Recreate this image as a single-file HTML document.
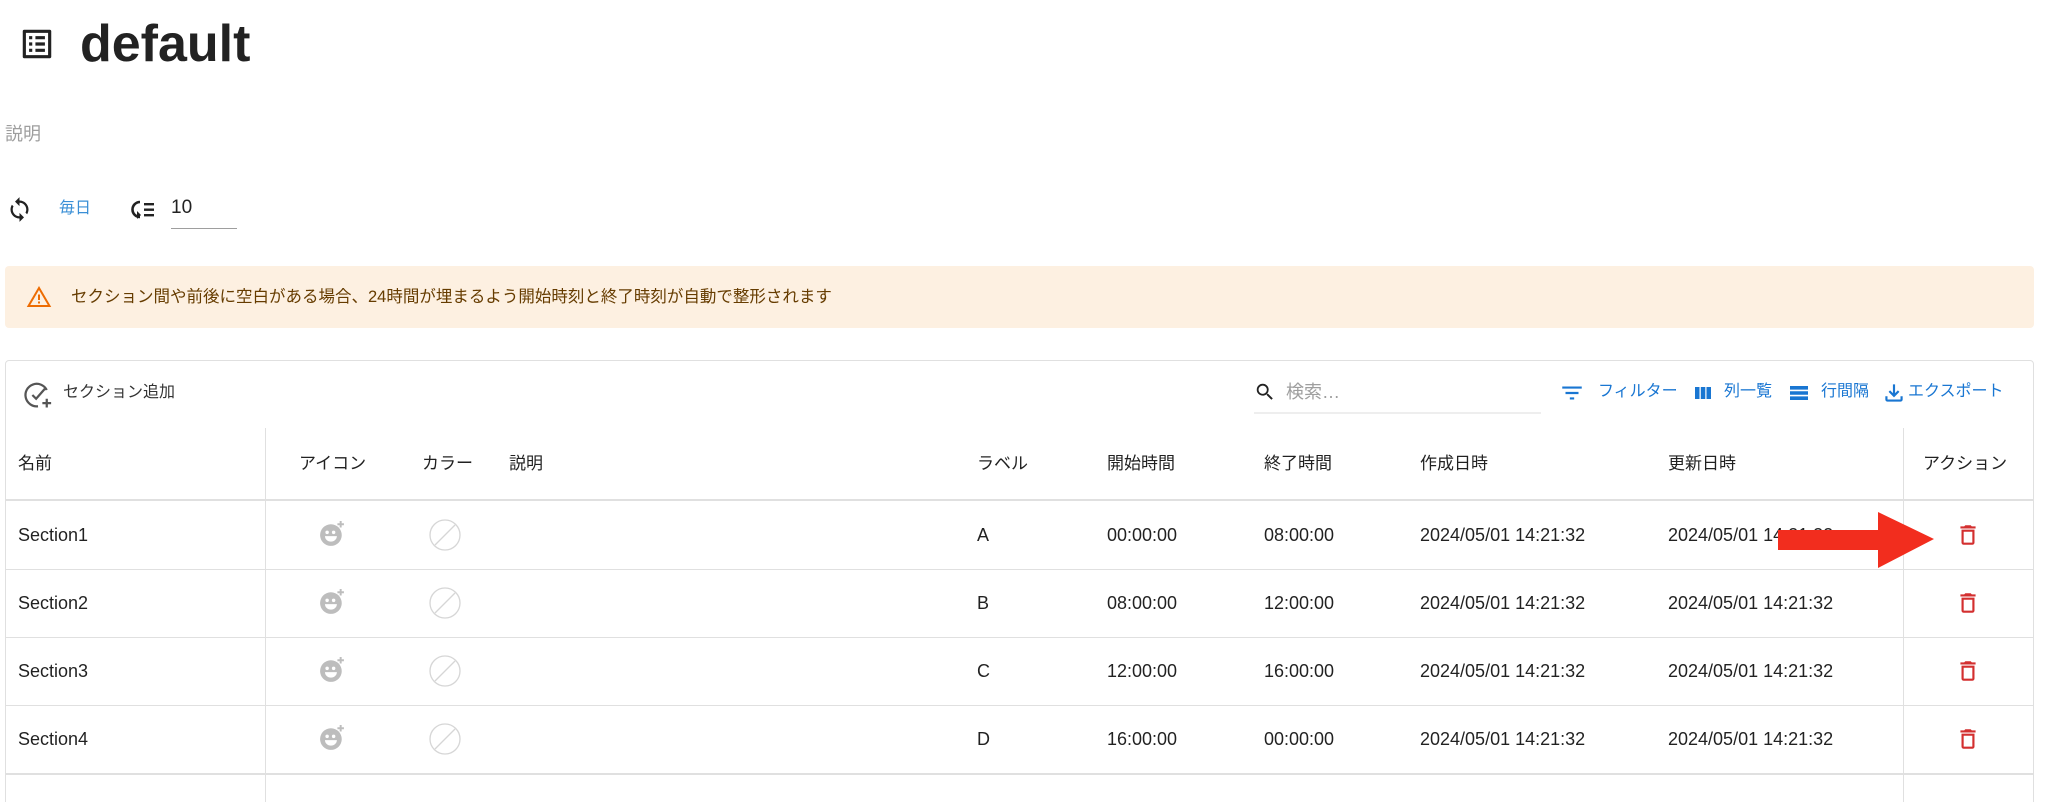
<!DOCTYPE html>
<html style="height:802px;overflow:hidden"><head><meta charset="utf-8"><style>
*{margin:0;padding:0;box-sizing:border-box}
body{width:2048px;height:802px;overflow:hidden;background:#fff;font-family:"Liberation Sans","Noto Sans CJK JP",sans-serif;color:#222;position:relative}
.a{position:absolute;white-space:nowrap}
.t{font-size:18px;line-height:24px;color:rgba(0,0,0,.87)}
.h{font-size:17px;line-height:24px;color:rgba(0,0,0,.87)}
.b{color:#1976d2;font-size:16px;line-height:24px}
.hl{position:absolute;left:5px;width:2029px;height:1px;background:#e0e0e0}
.vl{position:absolute;width:1px;background:#e0e0e0}
</style></head><body>
<svg class="a" style="left:18px;top:25px" width="38" height="38" viewBox="0 0 24 24"><path fill="#222" d="M19 5v14H5V5h14m1.1-2H3.9c-.5 0-.9.4-.9.9v16.2c0 .4.4.9.9.9h16.2c.4 0 .9-.5.9-.9V3.9c0-.5-.5-.9-.9-.9zM11 7h6v2h-6V7zm0 4h6v2h-6v-2zm0 4h6v2h-6zM7 7h2v2H7zm0 4h2v2H7zm0 4h2v2H7z"/></svg>
<div class="a" style="left:80px;top:12px;font-size:52px;font-weight:bold;line-height:64px;color:#222">default</div>
<div class="a" style="left:5px;top:121px;font-size:18px;line-height:26px;color:#9e9e9e">説明</div>
<svg class="a" style="left:6px;top:196px" width="27" height="27" viewBox="0 0 24 24"><path fill="#222" d="M12 4V1L8 5l4 4V6c3.310 0 6 2.690 6 6 0 1.010-.25 1.970-.7 2.800l1.460 1.460C19.540 15.030 20 13.570 20 12c0-4.420-3.580-8-8-8zm0 14c-3.310 0-6-2.690-6-6 0-1.010.25-1.970.7-2.800L5.240 7.740C4.460 8.970 4 10.430 4 12c0 4.420 3.580 8 8 8v3l4-4-4-4v3z"/></svg>
<div class="a b" style="left:59px;top:197px;color:#3a8fd6">毎日</div>
<svg class="a" style="left:130px;top:198px" width="30" height="24" viewBox="0 0 30 24"><path d="M10 4 A7 7 0 0 0 10 19" fill="none" stroke="#222" stroke-width="2.6"/><path d="M7 16l4 4-4 4z" fill="#222" transform="translate(0,-3)"/><rect x="14" y="5" width="10" height="2.4" fill="#222"/><rect x="14" y="10.5" width="10" height="2.4" fill="#222"/><rect x="14" y="16" width="10" height="2.4" fill="#222"/></svg>
<div class="a" style="left:171px;top:196px;font-size:19px;line-height:24px;color:#222">10</div>
<div class="a" style="left:171px;top:228px;width:66px;height:1px;background:#9e9e9e"></div>

<div class="a" style="left:5px;top:266px;width:2029px;height:62px;background:#fdf0e1;border-radius:4px"></div>
<svg class="a" style="left:26px;top:285px" width="26" height="24" viewBox="0 0 24 24"><path d="M12 3L1.5 21h21z" fill="none" stroke="#ed6c02" stroke-width="2"/><rect x="11" y="9.5" width="2" height="5.5" fill="#ed6c02"/><rect x="11" y="16.5" width="2" height="2" fill="#ed6c02"/></svg>
<div class="a" style="left:71px;top:285px;font-size:16.5px;line-height:24px;color:#663c00">セクション間や前後に空白がある場合、24時間が埋まるよう開始時刻と終了時刻が自動で整形されます</div>

<div class="a" style="left:5px;top:360px;width:2029px;height:460px;border:1px solid #e0e0e0;border-radius:4px"></div>
<svg class="a" style="left:23px;top:380px" width="30" height="30" viewBox="0 0 24 24"><path d="M19 8A9 9 0 1 0 12 21" fill="none" stroke="#555" stroke-width="1.8"/><path d="M7.5 12l3 3 7-8" fill="none" stroke="#555" stroke-width="1.8"/><path d="M19 15v7M15.5 18.5h7" stroke="#555" stroke-width="1.8"/></svg>
<div class="a" style="left:63px;top:381px;font-size:16px;line-height:24px;color:#333">セクション追加</div>
<svg class="a" style="left:1254px;top:381px" width="22" height="22" viewBox="0 0 24 24"><path fill="#222" d="M15.5 14h-.79l-.28-.27A6.470 6.470 0 0 0 16 9.5 6.5 6.5 0 1 0 9.5 16c1.610 0 3.090-.59 4.230-1.570l.27.28v.79l5 4.990L20.490 19l-4.990-5zm-6 0C7.010 14 5 11.990 5 9.5S7.010 5 9.5 5 14 7.010 14 9.5 11.990 14 9.5 14z"/></svg>
<div class="a" style="left:1286px;top:380px;font-size:18px;line-height:24px;color:#9e9e9e">検索…</div>
<div class="a" style="left:1254px;top:412px;width:287px;height:2px;background:#eee"></div>
<svg class="a" style="left:1559px;top:380px" width="26" height="26" viewBox="0 0 24 24"><path fill="#1976d2" d="M10 18h4v-2h-4v2zM3 6v2h18V6H3zm3 7h12v-2H6v2z"/></svg>
<div class="a b" style="left:1598px;top:380px">フィルター</div>
<svg class="a" style="left:1691px;top:381px" width="24" height="24" viewBox="0 0 24 24"><path fill="#1976d2" d="M4 6h4.5v12H4zM9.8 6h4.5v12H9.8zM15.5 6H20v12h-4.5z"/></svg>
<div class="a b" style="left:1724px;top:380px">列一覧</div>
<svg class="a" style="left:1787px;top:381px" width="24" height="24" viewBox="0 0 24 24"><path fill="#1976d2" d="M3 5h18v3.6H3zM3 10.2h18v3.6H3zM3 15.4h18V19H3z"/></svg>
<div class="a b" style="left:1821px;top:380px">行間隔</div>
<svg class="a" style="left:1881px;top:380px" width="26" height="26" viewBox="0 0 24 24"><path fill="#1976d2" d="M18 15v3H6v-3H4v3c0 1.1.9 2 2 2h12c1.1 0 2-.9 2-2v-3h-2zm-1-4-1.410-1.410L13 12.170V4h-2v8.170L8.410 9.590 7 11l5 5 5-5z"/></svg>
<div class="a b" style="left:1908px;top:380px">エクスポート</div>

<div class="vl" style="left:265px;top:428px;height:374px"></div>
<div class="vl" style="left:1903px;top:428px;height:374px"></div>
<div class="hl" style="top:499px;height:2px"></div>
<div class="hl" style="top:569px"></div>
<div class="hl" style="top:637px"></div>
<div class="hl" style="top:705px"></div>
<div class="hl" style="top:773px;height:2px"></div>

<div class="a h" style="left:18px;top:452px">名前</div>
<div class="a h" style="left:299px;top:452px">アイコン</div>
<div class="a h" style="left:422px;top:452px">カラー</div>
<div class="a h" style="left:509px;top:452px">説明</div>
<div class="a h" style="left:977px;top:452px">ラベル</div>
<div class="a h" style="left:1107px;top:452px">開始時間</div>
<div class="a h" style="left:1264px;top:452px">終了時間</div>
<div class="a h" style="left:1420px;top:452px">作成日時</div>
<div class="a h" style="left:1668px;top:452px">更新日時</div>
<div class="a h" style="left:1923px;top:452px">アクション</div>

<div class="a t" style="left:18px;top:523px">Section1</div>
<div class="a t" style="left:18px;top:591px">Section2</div>
<div class="a t" style="left:18px;top:659px">Section3</div>
<div class="a t" style="left:18px;top:727px">Section4</div>
<div class="a t" style="left:977px;top:523px">A</div>
<div class="a t" style="left:977px;top:591px">B</div>
<div class="a t" style="left:977px;top:659px">C</div>
<div class="a t" style="left:977px;top:727px">D</div>
<div class="a t" style="left:1107px;top:523px">00:00:00</div>
<div class="a t" style="left:1107px;top:591px">08:00:00</div>
<div class="a t" style="left:1107px;top:659px">12:00:00</div>
<div class="a t" style="left:1107px;top:727px">16:00:00</div>
<div class="a t" style="left:1264px;top:523px">08:00:00</div>
<div class="a t" style="left:1264px;top:591px">12:00:00</div>
<div class="a t" style="left:1264px;top:659px">16:00:00</div>
<div class="a t" style="left:1264px;top:727px">00:00:00</div>
<div class="a t" style="left:1420px;top:523px">2024/05/01 14:21:32</div>
<div class="a t" style="left:1420px;top:591px">2024/05/01 14:21:32</div>
<div class="a t" style="left:1420px;top:659px">2024/05/01 14:21:32</div>
<div class="a t" style="left:1420px;top:727px">2024/05/01 14:21:32</div>
<div class="a t" style="left:1668px;top:523px">2024/05/01 14:21:32</div>
<div class="a t" style="left:1668px;top:591px">2024/05/01 14:21:32</div>
<div class="a t" style="left:1668px;top:659px">2024/05/01 14:21:32</div>
<div class="a t" style="left:1668px;top:727px">2024/05/01 14:21:32</div>

<svg width="0" height="0" style="position:absolute"><defs>
<g id="face"><circle cx="11" cy="13" r="10" fill="#bdbdbd"/><circle cx="7.5" cy="10.5" r="1.6" fill="#fff"/><circle cx="13.5" cy="10.5" r="1.6" fill="#fff"/><path d="M5.5 14h11a5.5 5 0 0 1-11 0z" fill="#fff"/><path d="M20 0v6M17 3h6" stroke="#bdbdbd" stroke-width="1.8"/></g>
<g id="col"><circle cx="16" cy="16" r="15" fill="none" stroke="#d6d6d6" stroke-width="1.3"/><path d="M6 26L26 6" stroke="#d6d6d6" stroke-width="1.3"/></g>
<g id="trash"><path fill="#d32f2f" d="M6 19c0 1.1.9 2 2 2h8c1.1 0 2-.9 2-2V7H6v12zm2-10h8v10H8V9zm7.5-5-1-1h-5l-1 1H5v2h14V4z"/></g>
</defs></svg>
<svg class="a" style="left:319px;top:521px" width="26" height="26" viewBox="0 0 24 24"><use href="#face"/></svg>
<svg class="a" style="left:319px;top:589px" width="26" height="26" viewBox="0 0 24 24"><use href="#face"/></svg>
<svg class="a" style="left:319px;top:657px" width="26" height="26" viewBox="0 0 24 24"><use href="#face"/></svg>
<svg class="a" style="left:319px;top:725px" width="26" height="26" viewBox="0 0 24 24"><use href="#face"/></svg>
<svg class="a" style="left:429px;top:519px" width="32" height="32"><use href="#col"/></svg>
<svg class="a" style="left:429px;top:587px" width="32" height="32"><use href="#col"/></svg>
<svg class="a" style="left:429px;top:655px" width="32" height="32"><use href="#col"/></svg>
<svg class="a" style="left:429px;top:723px" width="32" height="32"><use href="#col"/></svg>
<svg class="a" style="left:1955px;top:522px" width="26" height="26" viewBox="0 0 24 24"><use href="#trash"/></svg>
<svg class="a" style="left:1955px;top:590px" width="26" height="26" viewBox="0 0 24 24"><use href="#trash"/></svg>
<svg class="a" style="left:1955px;top:658px" width="26" height="26" viewBox="0 0 24 24"><use href="#trash"/></svg>
<svg class="a" style="left:1955px;top:726px" width="26" height="26" viewBox="0 0 24 24"><use href="#trash"/></svg>

<svg class="a" style="left:1778px;top:510px" width="160" height="60"><path d="M0 20h100V2l56 27-56 29V40H0z" fill="#f22d1e"/></svg>
</body></html>
